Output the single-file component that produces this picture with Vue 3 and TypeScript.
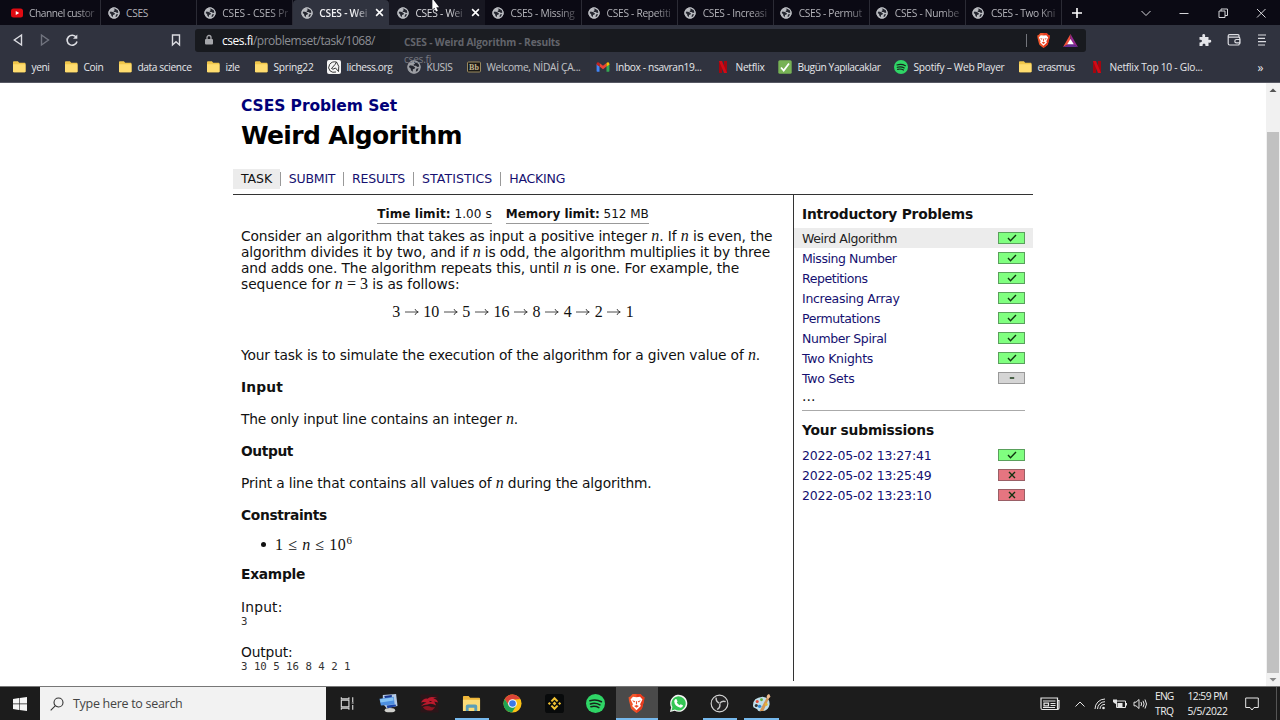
<script setup lang="ts">
interface Tab {
  title: string;
  width: number;
  state?: "active" | "hover";
  icon?: string;
}

interface Bookmark {
  icon: string;
  label: string;
  /** distance to the start of the next bookmark */
  slot: number;
  width: number;
}

interface Row {
  label: string;
  width: number;
  status: "ok" | "none" | "fail";
  current?: boolean;
}

const tabs: Tab[] = [
  { title: "Channel custor", width: 65, icon: "youtube" },
  { title: "CSES", width: 22 },
  { title: "CSES - CSES Pr", width: 66 },
  { title: "CSES - Wei", width: 48, state: "active" },
  { title: "CSES - Wei", width: 47, state: "hover" },
  { title: "CSES - Missing", width: 64 },
  { title: "CSES - Repetiti", width: 64 },
  { title: "CSES - Increasi", width: 64 },
  { title: "CSES - Permut", width: 63 },
  { title: "CSES - Numbe", width: 64 },
  { title: "CSES - Two Kni", width: 64 },
];

const bookmarks: Bookmark[] = [
  { icon: "folder", label: "yeni", slot: 52, width: 18 },
  { icon: "folder", label: "Coin", slot: 54, width: 20 },
  { icon: "folder", label: "data science", slot: 88, width: 54 },
  { icon: "folder", label: "izle", slot: 48, width: 14 },
  { icon: "folder", label: "Spring22", slot: 73, width: 40 },
  { icon: "lichess", label: "lichess.org", slot: 80, width: 46 },
  { icon: "globe", label: "KUSIS", slot: 60, width: 26 },
  { icon: "bb", label: "Welcome, NİDAİ ÇA...", slot: 129, width: 94 },
  { icon: "gmail", label: "Inbox - nsavran19...", slot: 120, width: 86 },
  { icon: "netflix", label: "Netflix", slot: 62, width: 29 },
  { icon: "check", label: "Bugün Yapılacaklar", slot: 116, width: 83 },
  { icon: "spotify", label: "Spotify – Web Player", slot: 124, width: 91 },
  { icon: "folder", label: "erasmus", slot: 72, width: 37 },
  { icon: "netflix", label: "Netflix Top 10 - Glo...", slot: 120, width: 93 },
];

const nav = [
  { label: "TASK", width: 31 },
  { label: "SUBMIT", width: 46.5 },
  { label: "RESULTS", width: 53 },
  { label: "STATISTICS", width: 70.5 },
  { label: "HACKING", width: 56 },
];

const problems: Row[] = [
  { label: "Weird Algorithm", width: 95, status: "ok", current: true },
  { label: "Missing Number", width: 94.5, status: "ok" },
  { label: "Repetitions", width: 65.5, status: "ok" },
  { label: "Increasing Array", width: 97.5, status: "ok" },
  { label: "Permutations", width: 78, status: "ok" },
  { label: "Number Spiral", width: 84.5, status: "ok" },
  { label: "Two Knights", width: 71, status: "ok" },
  { label: "Two Sets", width: 52.5, status: "none" },
];

const submissions: Row[] = [
  { label: "2022-05-02 13:27:41", width: 129.5, status: "ok" },
  { label: "2022-05-02 13:25:49", width: 129.5, status: "fail" },
  { label: "2022-05-02 13:23:10", width: 129.5, status: "fail" },
];

const sequence = [3, 10, 5, 16, 8, 4, 2, 1];

const apps = [
  { icon: "taskview" },
  { icon: "pc" },
  { icon: "dragon" },
  { icon: "explorer", open: true },
  { icon: "chrome" },
  { icon: "binance" },
  { icon: "spotify" },
  { icon: "brave", open: true, focused: true },
  { icon: "whatsapp" },
  { icon: "obs", open: true },
  { icon: "paint", open: true },
];

// spreads the letters so that a label takes exactly the given width
const vFit = {
  mounted(el: HTMLElement, { value }: { value: number }) {
    const count = (el.textContent ?? "").trim().length;
    const diff = value - el.getBoundingClientRect().width;
    el.style.letterSpacing = `${diff / count}px`;
  },
};
</script>

<template>
  <div class="screen">
    <svg class="sprite" width="0" height="0">
      <symbol id="globe" viewBox="0 0 24 24">
        <circle cx="12" cy="12" r="11" fill="#b9bbc0" />
        <path d="M5 9l5 1 4 3-1 2-3 1 0 4-3-2-1-4-3-2zM11 3l3 0 6 4 1 4-3 1-3-2-3 0-1-2 3-2zM16 15l4-1-2 5-3 1z" fill="#24262f" />
        <circle cx="12" cy="12" r="10.5" fill="none" stroke="#b9bbc0" stroke-width="2" />
      </symbol>
      <symbol id="youtube" viewBox="0 0 24 24">
        <rect x="0" y="3" width="24" height="18" rx="5" fill="#e00b12" />
        <path d="M9.500 8l7 4-7 4z" fill="#fff" />
      </symbol>
      <symbol id="folder" viewBox="0 0 14 14">
        <path d="M1 2.200q0-.9.900-.9h4l1.300 1.400h5.500q.8 0 .8.800v8q0 .8-.8.800H1.800q-.8 0-.8-.8z" fill="#f0c64a" />
        <path d="M1 4.200h12.500v7.300q0 .8-.8.800H1.800q-.8 0-.8-.8z" fill="#ffdd70" />
      </symbol>
      <symbol id="lichess" viewBox="0 0 14 14">
        <rect width="14" height="14" rx="2" fill="#f4f4f4" />
        <path d="M9.500 2Q5 1 2.600 4.500T3.200 11Q5.500 13 9 12M9.500 2L8 4.500 4.500 8.500 6 9.200 8.500 8 11.500 11.500M9.500 2Q13 6 11.500 11.500" fill="none" stroke="#222" stroke-width=".9" />
      </symbol>
      <symbol id="bb" viewBox="0 0 14 14">
        <rect x=".5" y="2" width="13" height="10" rx="1" fill="#17150f" stroke="#b7a169" />
        <text x="7" y="10" text-anchor="middle" font-size="8" font-family="Liberation Serif, serif" font-weight="700" fill="#e8d9a8">Bb</text>
      </symbol>
      <symbol id="gmail" viewBox="0 0 24 24">
        <path d="M1 7v12q0 1 1 1h4V11z" fill="#4285f4" />
        <path d="M23 7v12q0 1-1 1h-4V11z" fill="#34a853" />
        <path d="M6 5v6l6 5 6-5V5l-6 5z" fill="#ea4335" />
        <path d="M1 7q0-4 4-2.600L6 5v6L1 8z" fill="#c5221f" />
        <path d="M23 7q0-4-4-2.600L18 5v6l5-3z" fill="#fbbc04" />
      </symbol>
      <symbol id="netflix" viewBox="0 0 14 14">
        <path d="M3 1h3v12H3zM8 1h3v12H8z" fill="#a3060f" />
        <path d="M3 1h3l5 12H8z" fill="#d00a16" />
      </symbol>
      <symbol id="check" viewBox="0 0 14 14">
        <rect x=".3" y=".3" width="13.400" height="13.400" rx="1.500" fill="#77b255" />
        <path d="M3 7.500l2.700 3L11 3.500" fill="none" stroke="#fff" stroke-width="1.800" />
      </symbol>
      <symbol id="spotify" viewBox="0 0 24 24">
        <circle cx="12" cy="12" r="12" fill="#2fd566" />
        <path d="M5 8.500q8-2.300 14.500 1.300M5.600 12.500q6.500-2 12 1.200M6.200 16q5.500-1.500 10 1.200" fill="none" stroke="#17241b" stroke-width="2" stroke-linecap="round" />
      </symbol>
      <symbol id="brave" viewBox="0 0 24 24">
        <path d="M7 0h10l3 3 2 1-.5 4.500L19 18q-1 2-7 6-6-4-7-6L2.500 8.500 2 4l2-1z" fill="#f1562b" />
        <path d="M12 0h5l3 3 2 1-.5 4.500L19 18q-1 2-7 6z" fill="#e63a1d" />
        <path d="M12 4l4.500-.500L19.500 7l-3 6 1 2-5.500 5.500L6.500 15l1-2-3-6 3-3.500z" fill="#fff" />
        <path d="M6.500 8l4 1.200-1.500 1.600zM17.500 8l-4 1.200 1.500 1.600zM9 15l3-1.200 3 1.200-3 2.500zM11.300 9h1.400v4h-1.400z" fill="#ec4a26" />
      </symbol>
      <symbol id="taskview" viewBox="0 0 20 20">
        <path d="M3.500 6.500h8v7h-8zM3.500 3.500v1.500h8V3.500M3.500 16.500V15h8v1.500M15.500 3.500v5M15.500 11.500v5M14.500 9.500h2" fill="none" stroke="#d9d9d9" stroke-width="1.200" />
      </symbol>
      <symbol id="pc" viewBox="0 0 20 20">
        <ellipse cx="11.500" cy="17" rx="5.500" ry="2.300" fill="#cfcfcb" />
        <path d="M4 1l14-1 1.500 12.500L8 15 4 10z" fill="#b6cbe6" />
        <path d="M5.500 2l8-1v4h-7z" fill="#18358e" />
        <path d="M.5 5l15-2 1 8-14.500 1z" fill="#4d8fe0" />
        <path d="M1 5.500l14-1.700.4 3L1.500 9z" fill="#86c3f4" />
        <path d="M8 12l9.500-1 .5 2-9 2z" fill="#1941a4" />
      </symbol>
      <symbol id="dragon" viewBox="0 0 20 20">
        <rect x=".5" y=".5" width="19" height="19" fill="#2b1519" />
        <path d="M1 9Q4 4 8 5q2-3 10-1-3 0-4 1 4 0 5 4l-4-1 2 4q-5-3-9-1-4 0-7 2 2-3 6-4-4-1-6 0z" fill="#bb1a2c" />
        <path d="M3 14q5-3 9 0l4 0-3 3q-5 1-8-1z" fill="#8d1521" />
        <path d="M9 7l4 .8-2 .7z" fill="#120b0d" />
      </symbol>
      <symbol id="explorer" viewBox="0 0 20 20">
        <path d="M1 3q0-1 1-1h5l1.500 2H18q1 0 1 1v12H1z" fill="#f0b73a" />
        <path d="M1 6h18v11q0 1-1 1H1z" fill="#fbdc78" />
        <path d="M4 18v-5q0-2 2-2h8q2 0 2 2v5h-3v-3.500H7V18z" fill="#5b9fb8" />
      </symbol>
      <symbol id="chrome" viewBox="0 0 20 20">
        <circle cx="10" cy="10" r="9.500" fill="#fbc116" />
        <path d="M1.800 5.200A9.500 9.500 0 0 1 18.200 5.200L10 6 6 12z" fill="#dc4437" />
        <path d="M1.800 5.200A9.500 9.500 0 0 0 9.500 19.500L14 12 6 12z" fill="#1ea353" />
        <circle cx="10" cy="10" r="4.600" fill="#fff" />
        <circle cx="10" cy="10" r="3.500" fill="#3a78e6" />
      </symbol>
      <symbol id="binance" viewBox="0 0 20 20">
        <rect width="20" height="20" rx="3" fill="#080a0b" />
        <path d="M10 3l4 4-1.500 1.500L10 6 7.500 8.500 6 7zM10 17l4-4-1.500-1.500L10 14l-2.500-2.500L6 13zM3 10l1.600-1.600L6.200 10l-1.600 1.600zM13.800 10l1.600-1.600L17 10l-1.600 1.600zM8 10l2-2 2 2-2 2z" fill="#f0c132" />
      </symbol>
      <symbol id="whatsapp" viewBox="0 0 20 20">
        <path d="M1 19l1.300-5A9 9 0 1 1 6 17.700z" fill="#f5f5f5" />
        <path d="M2.700 17.300l.9-3.600a7.500 7.500 0 1 1 2.700 2.700z" fill="#35c655" />
        <path d="M6.500 5.500l1.300-.3 1.200 2.600-.8 1.200q1 2 3 2.800l1-1.100 2.500 1.200q0 2.600-2.700 2.500-6-1.400-6.500-6.500 0-1.500 1-2.400z" fill="#fff" />
      </symbol>
      <symbol id="obs" viewBox="0 0 20 20">
        <circle cx="10" cy="10" r="8.800" fill="#242324" stroke="#d4d4d4" stroke-width="1.200" />
        <path d="M6.500 3.800q-.5 4 3 5.700M16.500 8q-4.200-1.500-6.300 2M7.500 16.300q3.600-1.800 2.800-5.800" fill="none" stroke="#c8c8c8" stroke-width="1.500" />
      </symbol>
      <symbol id="paint" viewBox="0 0 20 20">
        <path d="M1 12Q1 4 11 3q8 1 7.500 8-1 7-8.500 7-4 1-4.500-2-2-1-4-2z" fill="#bfdeea" />
        <path d="M8 18l9-17 2 1-7 16z" fill="#d39656" />
        <path d="M15.500 4Q15 1 18 0l1.500 3-2.500 2z" fill="#eebd91" />
        <circle cx="5.500" cy="8" r="1.600" fill="#e04d3a" />
        <circle cx="10" cy="6" r="1.500" fill="#65ad3a" />
        <circle cx="4.500" cy="12" r="1.600" fill="#333" />
        <circle cx="8" cy="13" r="1.800" fill="#2d87d4" />
        <circle cx="15" cy="11" r="1.500" fill="#e9b730" />
      </symbol>
    </svg>

    <header class="browser">
      <div class="tabstrip">
        <div v-for="(t, i) in tabs" :key="i" class="tab" :class="t.state">
          <svg class="favicon"><use :href="`#${t.icon ?? 'globe'}`" /></svg>
          <span class="tab-title" :class="{ faded: t.width > 40 }"><span v-fit="t.width" class="fit">{{ t.title }}</span></span>
          <svg v-if="t.state" class="tab-close" viewBox="0 0 8 8"><path d="M1 1l6 6M7 1L1 7" /></svg>
        </div>
        <svg class="new-tab" viewBox="0 0 12 12"><path d="M6 1v10M1 6h10" /></svg>
        <div class="window-buttons">
          <svg viewBox="0 0 12 12"><path d="M1.500 4L6 8.500 10.500 4" /></svg>
          <svg viewBox="0 0 12 12"><path d="M1.500 6.500h9" /></svg>
          <svg viewBox="0 0 12 12"><path d="M2 4h6v6.500H2zM4 4V2h6.500v6.500H8" /></svg>
          <svg viewBox="0 0 12 12"><path d="M2 2l8.500 8.500M10.500 2L2 10.500" /></svg>
        </div>
      </div>

      <div class="toolbar">
        <svg class="tool back" viewBox="0 0 14 14"><path d="M10.500 2v10L3.300 7z" /></svg>
        <svg class="tool forward" viewBox="0 0 14 14"><path d="M3.500 2v10l7-5z" /></svg>
        <svg class="tool reload" viewBox="0 0 14 14"><path d="M11.300 4.400A5 5 0 1 0 12 8.500" /><path d="M12.300 1.500v4.200H8z" class="solid" /></svg>
        <svg class="tool mark" viewBox="0 0 14 14"><path d="M3.500 2h7v10L7 8.800 3.500 12z" /></svg>
        <div class="address">
          <svg class="lock" viewBox="0 0 10 12"><path d="M3 5V3.500a2 2 0 0 1 4 0V5" /><rect x="1" y="5" width="8" height="5.500" rx="1" /></svg>
          <span v-fit="153" class="url fit"><b>cses.fi</b>/problemset/task/1068/</span>
          <div class="address-end">
            <i class="bar"></i>
            <svg class="shield"><use href="#brave" /></svg>
            <svg class="rewards" viewBox="0 0 16 14">
              <path d="M8 0l-8 14 8-4z" fill="#f0503c" />
              <path d="M8 0l8 14-8-4z" fill="#93278f" />
              <path d="M0 14h16l-8-4.500z" fill="#652d91" />
              <path d="M8 5.500l3.500 5.500h-7z" fill="#fff" />
            </svg>
          </div>
        </div>
        <div class="extensions">
          <svg viewBox="0 0 14 14"><path class="solid" d="M1.500 4h3q-.8-3 1.200-3t1.300 3h3.500v3q2.800-.8 2.800 1.200T10.500 9.500V13H7.500q.3-2.500-1.500-2.500T4.500 13h-3V9.500q2.500.2 2.500-1.400T1.500 6.800z" /></svg>
          <svg viewBox="0 0 14 14"><path d="M12 4.500V2.700q0-1-1-1H2.500q-1.300 0-1.300 1.300v7.500q0 1.500 1.500 1.500h8.500q1 0 1-1M1.500 4.200h10.300q1 0 1 1v5q0 .8-.8.800M13 6.500H9.500a1.700 1.700 0 0 0 0 3.400H13z" /></svg>
          <svg viewBox="0 0 14 14"><path d="M3 2h8M3 5.300h7M3 8.600h8M3 12h7" /></svg>
        </div>
      </div>

      <div class="bookmarks">
        <div v-for="b in bookmarks" :key="b.label" class="bookmark" :style="{ width: `${b.slot}px` }">
          <svg class="bookmark-icon"><use :href="`#${b.icon}`" /></svg>
          <span v-fit="b.width" class="fit">{{ b.label }}</span>
        </div>
        <span class="overflow">»</span>
      </div>

      <!-- hover card of the tab under the pointer, fading out -->
      <div class="hovercard">
        <span v-fit="156" class="fit">CSES - Weird Algorithm - Results</span>
        <span v-fit="27" class="fit">cses.fi</span>
      </div>
      <svg class="pointer" viewBox="0 0 10 14"><path d="M1.500-2v12.500l2.300-2 1.800 4 2-.9-1.800-3.800h3.200z" /></svg>
    </header>

    <main class="page">
      <div class="site">
        <div class="site-name"><span v-fit="156" class="fit">CSES Problem Set</span></div>
        <h1><span v-fit="221" class="fit">Weird Algorithm</span></h1>
        <nav>
          <a v-for="(n, i) in nav" :key="n.label" :class="{ current: i === 0 }"><span v-fit="n.width" class="fit">{{ n.label }}</span></a>
        </nav>

        <div class="columns">
          <section class="task">
            <div class="limits">
              <span><span v-fit="114.5" class="fit"><b>Time limit:</b> 1.00 s</span></span>
              <span><span v-fit="143" class="fit"><b>Memory limit:</b> 512 MB</span></span>
            </div>
            <div class="line"><span v-fit="531.5" class="fit">Consider an algorithm that takes as input a positive integer <i>n</i>. If <i>n</i> is even, the</span></div>
            <div class="line"><span v-fit="529" class="fit">algorithm divides it by two, and if <i>n</i> is odd, the algorithm multiplies it by three</span></div>
            <div class="line"><span v-fit="498" class="fit">and adds one. The algorithm repeats this, until <i>n</i> is one. For example, the</span></div>
            <div class="line"><span v-fit="218.5" class="fit">sequence for <i>n</i> <em>= 3</em> is as follows:</span></div>
            <div class="sequence">
              <template v-for="(n, i) in sequence" :key="n">
                <svg v-if="i" viewBox="0 0 14 8"><path d="M0 4h13M10 1q.8 2.400 3.300 3Q10.800 4.600 10 7" /></svg>
                <span>{{ n }}</span>
              </template>
            </div>
            <div class="row"><span v-fit="519" class="fit">Your task is to simulate the execution of the algorithm for a given value of <i>n</i>.</span></div>
            <h2><span v-fit="42" class="fit">Input</span></h2>
            <div class="row"><span v-fit="277" class="fit">The only input line contains an integer <i>n</i>.</span></div>
            <h2><span v-fit="52" class="fit">Output</span></h2>
            <div class="row"><span v-fit="410.5" class="fit">Print a line that contains all values of <i>n</i> during the algorithm.</span></div>
            <h2><span v-fit="86" class="fit">Constraints</span></h2>
            <div class="constraint"><span v-fit="77.5" class="fit">1 ≤ <i>n</i> ≤ 10<sup>6</sup></span></div>
            <h2><span v-fit="64" class="fit">Example</span></h2>
            <div class="sample">
              <span v-fit="41.500" class="fit">Input:</span>
              <code>3</code>
            </div>
            <div class="sample">
              <span v-fit="51.500" class="fit">Output:</span>
              <code><span v-fit="109.500" class="fit">3 10 5 16 8 4 2 1</span></code>
            </div>
          </section>

          <aside>
            <h3><span v-fit="171" class="fit">Introductory Problems</span></h3>
            <div v-for="p in problems" :key="p.label" class="entry" :class="{ current: p.current }">
              <a v-fit="p.width" class="fit">{{ p.label }}</a>
              <span class="badge" :class="p.status">
                <svg viewBox="0 0 10 8"><path :d="p.status === 'ok' ? 'M1 4l2.500 2.700L9 1' : 'M2.800 4h4.400'" /></svg>
              </span>
            </div>
            <div class="more">...</div>
            <h3 class="second"><span v-fit="132" class="fit">Your submissions</span></h3>
            <div v-for="s in submissions" :key="s.label" class="entry">
              <a v-fit="s.width" class="fit">{{ s.label }}</a>
              <span class="badge" :class="s.status">
                <svg viewBox="0 0 10 8"><path :d="s.status === 'ok' ? 'M1 4l2.500 2.700L9 1' : 'M2 1l6 6M8 1L2 7'" /></svg>
              </span>
            </div>
          </aside>
        </div>
      </div>

      <div class="scrollbar">
        <svg viewBox="0 0 10 6"><path d="M1.500 5L5 1.500 8.500 5z" /></svg>
        <div class="thumb"></div>
        <svg class="down" viewBox="0 0 10 6"><path d="M1.500 1L5 4.500 8.500 1z" /></svg>
      </div>
    </main>

    <footer class="taskbar">
      <div class="start">
        <svg viewBox="0 0 14 14"><path d="M0 2l6-.9v5.500H0zM6.600 1L14 0v6.600H6.600zM0 7.300h6V13l-6-.9zM6.600 7.300H14V14l-7.400-1z" /></svg>
      </div>
      <div class="search">
        <svg viewBox="0 0 14 14"><circle cx="8.500" cy="5.500" r="4.500" /><path d="M5.200 8.800L.7 13.300" /></svg>
        <span v-fit="109.500" class="fit">Type here to search</span>
      </div>
      <div class="apps">
        <div v-for="a in apps" :key="a.icon" class="app" :class="{ open: a.open, focused: a.focused }">
          <svg><use :href="`#${a.icon}`" /></svg>
        </div>
      </div>
      <div class="tray">
        <svg class="news" viewBox="0 0 20 14"><path d="M1 1h16.500v11.500H2.500Q1 12.500 1 11zM17.500 3.500H19v7.500q0 1.500-1.500 1.500M3 4h12.500M10.500 6.500h5M10.500 8.500h5M3 10.500h12" /><path d="M4 6.200h4.500v2.600H4z" /></svg>
        <svg class="chevron" viewBox="0 0 10 6"><path d="M.5 5.500L5 1l4.500 4.500" /></svg>
        <svg class="wifi" viewBox="0 0 12 12"><path d="M1 11A10 10 0 0 1 11 1M3.500 11A7.500 7.500 0 0 1 11 3.700M6 11a5 5 0 0 1 5-4.600" /><circle cx="9.500" cy="10" r="1.300" class="solid" /></svg>
        <svg class="battery" viewBox="0 0 14 12"><path d="M3.500 3h9v6.500h-9zM13.500 5v2.500" /><path class="solid" d="M4.500 5h5v4h-5zM0 1.500h4v2.500L2.500 6 0 4z" /></svg>
        <svg class="volume" viewBox="0 0 14 12"><path d="M1 4.200h2L6 1.500v9L3 7.800H1zM8 4q1.200 2 0 4M10 2.800q2.200 3.200 0 6.400M12 1.500q3 4.500 0 9" /></svg>
        <div class="lang"><span v-fit="18.500" class="fit">ENG</span><span v-fit="18.500" class="fit">TRQ</span></div>
        <div class="clock"><span v-fit="40" class="fit">12:59 PM</span><span v-fit="40" class="fit">5/5/2022</span></div>
        <svg class="notices" viewBox="0 0 14 14"><path d="M.7 1h12.600v9.500H9L7 13l-2-2.500H.7z" /></svg>
      </div>
    </footer>
  </div>
</template>

<style>
body {
  overflow: hidden;
}
</style>

<style scoped>
.screen {
  width: 1280px;
  height: 720px;
  display: flex;
  flex-direction: column;
  overflow: hidden;
  background: #fff;
  font-family: "DejaVu Sans", sans-serif;
}

.sprite {
  position: absolute;
}

svg {
  display: block;
  flex: none;
}

.fit {
  display: inline-block;
  white-space: nowrap;
}

/* browser chrome */
.browser {
  position: relative;
  height: 83px;
  flex: none;
  box-sizing: border-box;
  background: #30333f;
  border-bottom: 1px solid #565863;
  font-family: "Open Sans", "Noto Sans", sans-serif;
  font-size: 10.200px;
  color: #e6e7ea;
}

.tabstrip {
  display: flex;
  align-items: center;
  height: 25px;
  padding-left: 5px;
  background: #0b0a14;
}

.tab {
  display: flex;
  align-items: center;
  width: 96.100px;
  height: 25px;
  padding: 0 4px 0 6.500px;
  box-sizing: border-box;
  border-right: 1px solid #2b2b35;
  color: #b2b2b8;
}

.tab:first-child {
  padding-left: 5.500px;
}

.tab.active {
  background: #30333f;
  border-color: transparent;
  border-radius: 4px 4px 0 0;
  color: #f2f2f4;
  font-weight: 600;
}

.tab.hover {
  background: #171721;
  border-color: transparent;
  color: #dcdce0;
}

.favicon {
  width: 12px;
  height: 12px;
  margin-right: 6.500px;
}

.tab.active .favicon,
.tab.hover .favicon {
  margin-left: 1px;
}

.tab-title {
  flex: 1;
}

.tab-title.faded {
  -webkit-mask-image: linear-gradient(90deg, #000 72%, rgba(0, 0, 0, 0.25));
  mask-image: linear-gradient(90deg, #000 72%, rgba(0, 0, 0, 0.25));
}

.tab-close {
  width: 9px;
  height: 9px;
  margin: 0 0 0 8px;
  fill: none;
  stroke: #fff;
  stroke-width: 1.4;
}

.new-tab {
  width: 12px;
  height: 12px;
  margin-left: 9px;
  fill: none;
  stroke: #fff;
  stroke-width: 1.6;
}

.window-buttons {
  display: flex;
  gap: 26.300px;
  margin: 0 13px 0 auto;
}

.window-buttons svg {
  width: 12px;
  height: 12px;
  fill: none;
  stroke: #d5d5d9;
  stroke-width: 1;
}

.toolbar {
  display: flex;
  align-items: center;
  height: 30px;
  margin-bottom: 1px;
  padding: 0 12px 0 11px;
}

.tool {
  width: 14px;
  height: 14px;
  fill: none;
  stroke: #dcdde2;
  stroke-width: 1.4;
}

.forward {
  margin: 0 13px;
  stroke: #71747f;
}

.reload {
  stroke-width: 1.6;
}

.solid {
  fill: #dcdde2;
  stroke: none;
}

.mark {
  margin: 0 12px 0 90px;
}

.address {
  display: flex;
  align-items: center;
  width: 891px;
  height: 23px;
  border-radius: 3px;
  background: #181a1f;
}

.lock {
  width: 10px;
  height: 12px;
  margin: 0 8px 0 9px;
  fill: #a6a7ab;
}

.lock path {
  fill: none;
  stroke: #a6a7ab;
  stroke-width: 1.3;
}

.url {
  font-size: 12px;
  color: #8d8f95;
}

.url b {
  font-weight: 400;
  color: #fff;
}

.address-end {
  display: flex;
  align-items: center;
  margin-left: auto;
}

.bar {
  width: 1px;
  height: 13px;
  background: #73757b;
}

.shield {
  width: 15px;
  height: 15px;
  margin: 0 12px 0 9px;
}

.rewards {
  width: 15px;
  height: 13px;
  margin-right: 8px;
}

.extensions {
  display: flex;
  gap: 14.500px;
  margin-left: auto;
  margin-right: -1px;
}

.extensions svg {
  width: 14px;
  height: 14px;
  fill: none;
  stroke: #dcdde2;
  stroke-width: 1.2;
}

.extensions .solid {
  fill: #e4e5e9;
  stroke: none;
}

.bookmarks {
  display: flex;
  align-items: center;
  height: 22px;
  padding-left: 11.500px;
}

.bookmark {
  display: flex;
  align-items: center;
  flex: none;
}

.bookmark-icon {
  width: 14px;
  height: 14px;
  margin-right: 6px;
}

.overflow {
  margin-left: 48px;
  font-size: 12px;
}

.hovercard {
  position: absolute;
  left: 390px;
  top: 29px;
  display: flex;
  flex-direction: column;
  align-items: flex-start;
  gap: 1px;
  width: 200px;
  height: 53px;
  padding: 5px 14px;
  box-sizing: border-box;
  background: rgba(40, 43, 52, 0.2);
  line-height: 16px;
  color: #777981;
}

.hovercard span:first-child {
  font-weight: 700;
  color: #62646b;
}

.pointer {
  position: absolute;
  left: 431px;
  top: 0;
  width: 9px;
  height: 13px;
  fill: #fff;
}

/* page */
.page {
  flex: 1;
  display: flex;
  justify-content: flex-end;
}

.site {
  width: 800px;
  margin-right: 233px;
  color: #111;
}

.site-name {
  height: 29px;
  padding: 12px 8px 0;
  box-sizing: border-box;
  font-size: 15.500px;
  line-height: 22px;
  font-weight: 700;
  color: #000078;
}

h1 {
  margin: 0;
  height: 57px;
  padding: 8px 8px 0;
  box-sizing: border-box;
  font-size: 25px;
  line-height: 32px;
  color: #000;
}

nav {
  display: flex;
  height: 25px;
  border-bottom: 1px solid #333;
  font-size: 12.500px;
  line-height: 20px;
}

nav a {
  position: relative;
  height: 20px;
  padding: 0 8px 0 8.800px;
  color: #151070;
}

nav a + a::before {
  content: "";
  position: absolute;
  left: 0;
  top: 3px;
  width: 1px;
  height: 14px;
  background: #999;
}

nav a.current {
  padding-left: 8px;
  background: #ececec;
  color: #111;
}

.columns {
  display: flex;
  height: 486px;
}

.task {
  width: 560px;
  padding-left: 8px;
  box-sizing: border-box;
  font-size: 13.800px;
}

.limits {
  display: flex;
  justify-content: center;
  gap: 14px;
  height: 33px;
  padding: 10px 8px 0 0;
  box-sizing: border-box;
  font-size: 12px;
  line-height: 18px;
}

.limits > span {
  height: 18px;
  border-bottom: 1px solid #999;
}

.line {
  height: 16px;
  line-height: 16px;
}

.task i,
.task em {
  font-family: "Liberation Serif", serif;
  font-size: 16px;
  line-height: 1;
}

.task em {
  font-style: normal;
}

.sequence {
  display: flex;
  justify-content: center;
  align-items: center;
  gap: 4.550px;
  height: 40px;
  margin-bottom: 7px;
  padding-right: 8px;
  font-family: "Liberation Serif", serif;
  font-size: 16px;
}

.sequence svg {
  width: 14px;
  height: 8px;
  fill: none;
  stroke: #222;
  stroke-width: 0.8;
}

.row,
h2 {
  margin: 0;
  height: 32px;
  line-height: 32px;
  font-size: 13.800px;
}

.constraint {
  display: flex;
  align-items: center;
  height: 27px;
  padding-left: 20px;
  font-family: "Liberation Serif", serif;
  font-size: 16px;
}

.constraint::before {
  content: "";
  width: 5px;
  height: 5px;
  margin-right: 9px;
  border-radius: 50%;
  background: #111;
}

.constraint sup {
  font-size: 11px;
  line-height: 1;
}

.sample {
  display: flex;
  flex-direction: column;
  align-items: flex-start;
  height: 45px;
  padding-top: 9px;
  box-sizing: border-box;
  line-height: 16px;
}

.sample code {
  margin-top: 1px;
  font-family: "DejaVu Sans Mono", monospace;
  font-size: 10.700px;
  line-height: 12px;
  color: #333;
}

aside {
  width: 240px;
  box-sizing: border-box;
  border-left: 1px solid #333;
  font-size: 12.500px;
}

h3 {
  margin: 0;
  height: 33px;
  padding: 9px 0 0 8px;
  box-sizing: border-box;
  font-size: 13.800px;
  line-height: 21px;
}

.entry {
  display: flex;
  justify-content: space-between;
  align-items: center;
  height: 20px;
  padding: 0 8px;
  color: #151070;
}

.entry.current {
  background: #ececec;
  color: #222;
}

.badge {
  display: flex;
  justify-content: center;
  align-items: center;
  width: 27px;
  height: 12px;
  box-sizing: border-box;
  border: 1px solid #5aa05c;
}

.badge svg {
  width: 10px;
  height: 8px;
  fill: none;
  stroke: #10330f;
  stroke-width: 1.4;
}

.badge.ok {
  background: #80ff80;
}

.badge.none {
  border-color: #999;
  background: #d5d5d5;
}

.badge.fail {
  border-color: #9a5f66;
  background: #e57580;
}

.more {
  height: 22px;
  margin: 0 8px;
  border-bottom: 1px solid #aaa;
  font-size: 14px;
  line-height: 17px;
}

.second {
  height: 34px;
}

.scrollbar {
  display: flex;
  flex-direction: column;
  align-items: center;
  width: 14px;
  background: #f1f1f1;
}

.scrollbar svg {
  width: 10px;
  height: 6px;
  margin-top: 4px;
  fill: #555;
}

.scrollbar .down {
  margin-top: 4px;
  fill: #888;
}

.thumb {
  width: 12px;
  height: 541px;
  margin-top: 39px;
  background: #c1c1c1;
}

/* taskbar */
.taskbar {
  display: flex;
  flex: none;
  height: 34px;
  box-sizing: border-box;
  border-top: 1px solid #777;
  background: #1c1c1c;
  font-family: "Open Sans", "Noto Sans", sans-serif;
  color: #eee;
}

.start {
  display: flex;
  justify-content: center;
  align-items: center;
  width: 40px;
}

.start svg {
  width: 14px;
  height: 14px;
  fill: #f5f5f5;
}

.search {
  display: flex;
  align-items: center;
  width: 286px;
  padding-left: 10px;
  box-sizing: border-box;
  background: #f2f2f2;
  font-size: 12.500px;
  color: #444;
}

.search svg {
  width: 14px;
  height: 14px;
  margin-right: 9px;
  fill: none;
  stroke: #333;
  stroke-width: 1.1;
}

.apps {
  display: flex;
  padding-left: 0.500px;
}

.app {
  position: relative;
  display: flex;
  justify-content: center;
  align-items: center;
  width: 41.400px;
}

.app svg {
  width: 19px;
  height: 19px;
}

.app.open::after {
  content: "";
  position: absolute;
  left: 4px;
  right: 3px;
  bottom: 0;
  height: 2px;
  background: #76b9ed;
}

.app.focused {
  background: #4a4a4a;
}

.app.focused::after {
  left: 0;
  right: 0;
}

.tray {
  display: flex;
  align-items: center;
  margin-left: auto;
  padding-right: 4px;
  margin-right: 3px;
  border-right: 1px solid #555;
  font-size: 10.300px;
}

.tray svg {
  height: 12px;
  fill: none;
  stroke: #e6e6e6;
  stroke-width: 1;
}

.tray .solid {
  fill: #e6e6e6;
  stroke: none;
}

.tray .news {
  width: 20px;
  height: 14px;
  stroke-width: 1.2;
}

.tray .chevron {
  width: 10px;
  height: 6px;
  margin-left: 15px;
}

.wifi {
  width: 12px;
  margin-left: 9px;
}

.battery {
  width: 14px;
  margin-left: 7px;
}

.volume {
  width: 14px;
  margin-left: 6px;
}

.lang,
.clock {
  display: flex;
  flex-direction: column;
  align-items: flex-start;
  line-height: 15px;
}

.lang {
  margin-left: 8px;
}

.clock {
  margin: 0 17.500px 0 14px;
}

.tray .notices {
  width: 14px;
  height: 14px;
  margin-right: 13px;
}
</style>
